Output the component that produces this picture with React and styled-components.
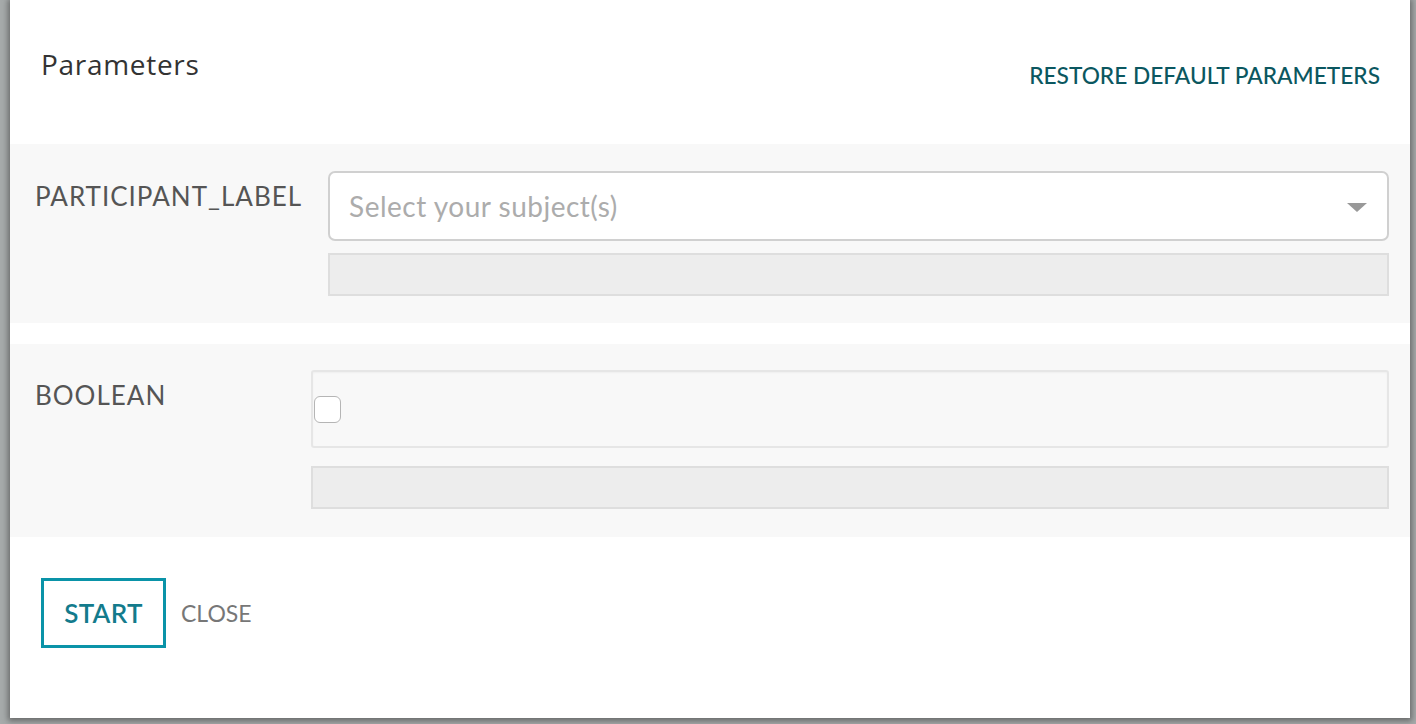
import React from "react";
import styled, { createGlobalStyle } from "styled-components";

const GlobalStyle = createGlobalStyle`
  html, body {
    margin: 0;
    padding: 0;
    background: #a7abab;
    overflow: hidden;
  }
  * {
    box-sizing: border-box;
  }
`;

const Page = styled.div`
  width: 1416px;
  height: 724px;
  padding-left: 10px;
`;

const Modal = styled.div`
  width: 1400px;
  height: 718px;
  background: #fff;
  box-shadow: 0 1px 6px 2px rgba(60, 60, 60, 0.6);
  display: flex;
  flex-direction: column;
`;

const Header = styled.div`
  height: 144px;
  display: flex;
  justify-content: space-between;
  align-items: flex-start;
  padding: 0 30px 0 31px;
`;

const Title = styled.h2`
  margin: 47px 0 0;
  font-family: "Open Sans", sans-serif;
  font-weight: 400;
  font-size: 28px;
  line-height: 34px;
  letter-spacing: 0.7px;
  color: #333;
`;

const RestoreLink = styled.a`
  margin-top: 62px;
  font-family: Lato, sans-serif;
  font-weight: 500;
  font-size: 22.7px;
  line-height: 28px;
  color: #0b5760;
  text-decoration: none;
  cursor: pointer;
`;

const Section = styled.div`
  background: #f8f8f8;
  display: flex;
  align-items: flex-start;
  padding: ${(p) => p.$top}px 21px ${(p) => p.$bottom}px 25px;
  margin-bottom: ${(p) => p.$gap || 0}px;
`;

const Label = styled.div`
  min-width: 276px;
  padding-right: 26px;
  padding-top: ${(p) => p.$offset}px;
  font-family: Lato, sans-serif;
  font-size: 26px;
  line-height: 30px;
  letter-spacing: 1px;
  color: #555;
  white-space: nowrap;
`;

const Field = styled.div`
  flex: 1;
  display: flex;
  flex-direction: column;
  gap: ${(p) => p.$gap}px;
`;

const Select = styled.div`
  height: 70px;
  background: #fff;
  border: 2px solid #d0d0d0;
  border-radius: 7px;
  display: flex;
  align-items: center;
  justify-content: space-between;
  padding: 0 20px 0 19px;
`;

const Placeholder = styled.span`
  font-family: Lato, sans-serif;
  font-size: 28px;
  letter-spacing: 0.5px;
  color: #acacac;
`;

const Caret = styled.span`
  width: 0;
  height: 0;
  border-left: 10px solid transparent;
  border-right: 10px solid transparent;
  border-top: 9px solid #999;
  margin-top: 2px;
`;

const HelpBar = styled.div`
  height: 43px;
  background: #ededed;
  border: 2px solid #dedede;
`;

const CheckWrap = styled.div`
  height: 78px;
  background: #f8f8f8;
  border: 2px solid #e6e6e6;
  border-radius: 3px;
  box-shadow: inset 0 1px 2px rgba(0, 0, 0, 0.04);
  display: flex;
  align-items: center;
  padding-left: 1px;
`;

const Checkbox = styled.span`
  width: 27px;
  height: 27px;
  background: #fff;
  border: 1.5px solid #b5b5b5;
  border-radius: 6px;
`;

const Footer = styled.div`
  display: flex;
  align-items: center;
  gap: 15px;
  padding: 41px 0 0 31px;
`;

const StartButton = styled.button`
  width: 125px;
  height: 70px;
  background: #fff;
  border: 3px solid #0a93a8;
  font-family: Lato, sans-serif;
  font-weight: 600;
  font-size: 26px;
  letter-spacing: 0.3px;
  color: #137b8c;
  cursor: pointer;
`;

const CloseButton = styled.button`
  background: none;
  border: none;
  padding: 0;
  font-family: Lato, sans-serif;
  font-size: 23px;
  color: #777;
  cursor: pointer;
`;

export default function App() {
  return (
    <Page>
      <GlobalStyle />
      <Modal>
        <Header>
          <Title>Parameters</Title>
          <RestoreLink>RESTORE DEFAULT PARAMETERS</RestoreLink>
        </Header>

        <Section $top={27} $bottom={27} $gap={21}>
          <Label $offset={10}>PARTICIPANT_LABEL</Label>
          <Field $gap={12}>
            <Select>
              <Placeholder>Select your subject(s)</Placeholder>
              <Caret />
            </Select>
            <HelpBar />
          </Field>
        </Section>

        <Section $top={26} $bottom={28}>
          <Label $offset={10}>BOOLEAN</Label>
          <Field $gap={18}>
            <CheckWrap>
              <Checkbox />
            </CheckWrap>
            <HelpBar />
          </Field>
        </Section>

        <Footer>
          <StartButton>START</StartButton>
          <CloseButton>CLOSE</CloseButton>
        </Footer>
      </Modal>
    </Page>
  );
}
